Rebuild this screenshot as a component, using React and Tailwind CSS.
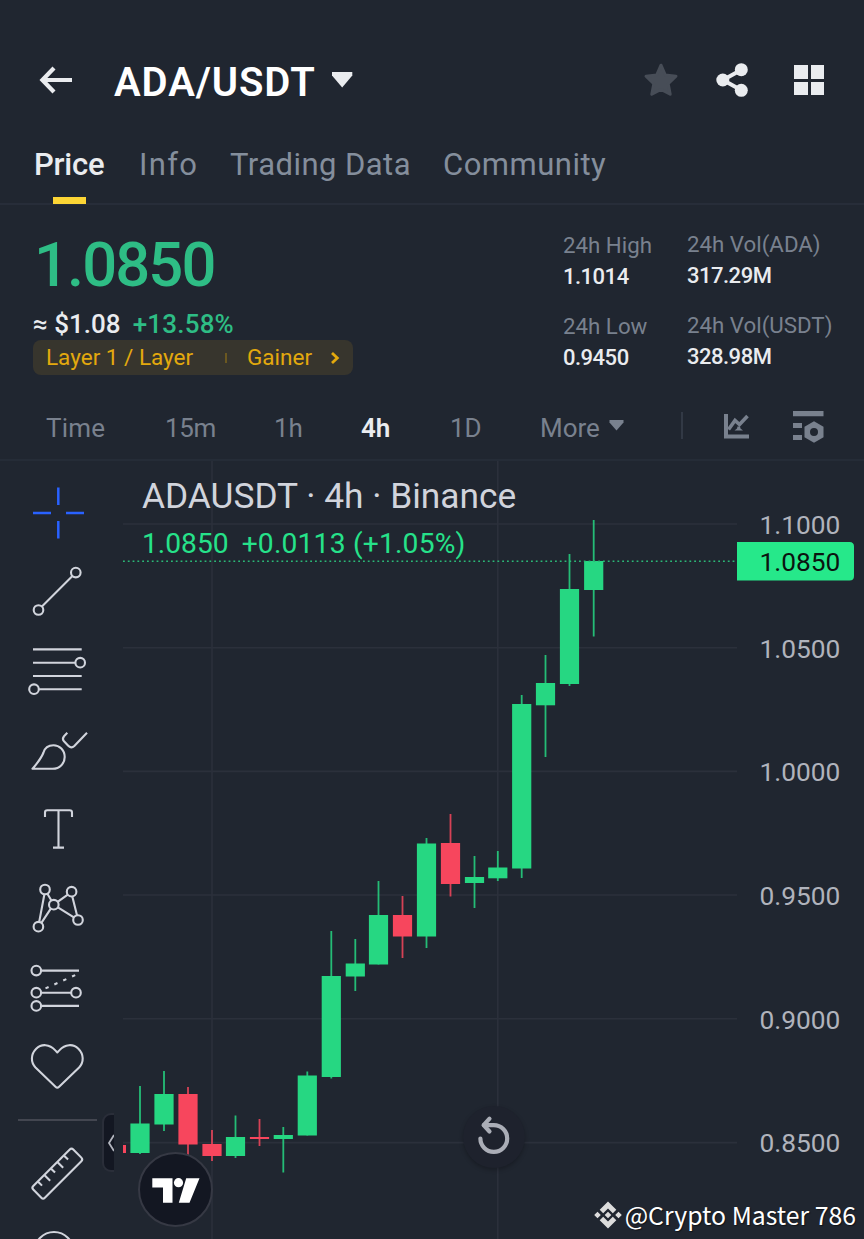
import React from "react";

const UP = "#26d782";
const DOWN = "#f7465d";

/* x centre, wick top, body top, body bottom, wick bottom, colour */
const candles = [
  [140, 1086, 1123.5, 1153, 1154, UP],
  [164, 1071, 1094, 1124.5, 1131, UP],
  [188, 1087, 1094, 1144.5, 1157, DOWN],
  [212, 1130, 1144, 1156, 1161, DOWN],
  [235.5, 1115.5, 1137, 1156, 1158, UP],
  [259.5, 1119, 1137, 1139, 1146, DOWN],
  [283.3, 1127, 1135, 1139, 1172.5, UP],
  [307.3, 1071.5, 1075.5, 1135.5, 1135.5, UP],
  [331.3, 931, 976, 1077, 1078.5, UP],
  [355.3, 939, 963.5, 976.5, 991, UP],
  [378.5, 881, 915, 964.5, 964.5, UP],
  [402.5, 896, 915, 936.5, 958, DOWN],
  [426.5, 838, 843.5, 936.5, 948, UP],
  [450.5, 814, 843, 884, 896.5, DOWN],
  [474.5, 856, 877, 883, 908, UP],
  [497.8, 851, 867.5, 878.3, 881, UP],
  [521.7, 695, 704, 868.5, 878, UP],
  [545.5, 655, 683, 705.3, 757, UP],
  [569.5, 554, 589, 684, 686, UP],
  [593.7, 520, 561, 590, 636.5, UP],
];

const levels = [
  [524, "1.1000"],
  [647.7, "1.0500"],
  [771.4, "1.0000"],
  [895, "0.9500"],
  [1018.8, "0.9000"],
  [1142.6, "0.8500"],
];

function Chart() {
  return (
    <svg className="block h-[778px] w-[741px]" viewBox="123 461 741 778" fontFamily="Roboto, sans-serif">
      <g stroke="#2b303b" strokeWidth="1.6">
        {levels.map(([y]) => (
          <line key={y} x1="123" x2="737" y1={y} y2={y} />
        ))}
        <line x1="212" x2="212" y1="461" y2="1239" />
        <line x1="497.8" x2="497.8" y1="461" y2="1239" />
      </g>
      <rect x="123" y="1145" width="3" height="8" fill={DOWN} />
      {candles.map(([x, wt, bt, bb, wb, c]) => (
        <g key={x} fill={c}>
          <rect x={x - 0.9} y={wt} width="1.8" height={wb - wt} opacity="0.85" />
          <rect x={x - 9.6} y={bt} width="19.2" height={bb - bt} />
        </g>
      ))}
      <line x1="123" x2="737" y1="561.3" y2="561.3" stroke="#2bb877" strokeWidth="1.6" strokeDasharray="1.8 3" />
      <g fill="#b0b3bc" fontSize="26.3">
        {levels.map(([y, label]) => (
          <text key={label} x="759.5" y={y + 9.8}>{label}</text>
        ))}
      </g>
      <path d="M737 542H849.5Q854 542 854 546.5V576Q854 580.5 849.5 580.5H737Z" fill="#26e88a" />
      <text x="759.5" y="570.8" fontSize="26.3" fill="#0b1410">1.0850</text>
    </svg>
  );
}

function Tool({ top, children, color = "#d1d4dc" }) {
  return (
    <svg
      className="block h-[79px] w-[79px] shrink-0"
      viewBox={`18 ${top} 79 79`}
      fill="none"
      stroke={color}
      strokeWidth="2.1"
      strokeLinejoin="round"
    >
      {children}
    </svg>
  );
}

function Toolbar() {
  return (
    <div className="flex h-[778px] w-[123px] shrink-0 flex-col overflow-hidden pl-[18px] pt-3">
      <Tool top={473} color="#2962ff">
        <path strokeWidth="2.5" d="M58.3 487.5V505M58.3 521V538.5M33 513H51M66 513H84" />
      </Tool>
      <Tool top={552}>
        <circle cx="75.8" cy="572.6" r="4.8" />
        <circle cx="38.5" cy="610" r="4.8" />
        <path d="M72.4 576L41.9 606.6" />
      </Tool>
      <Tool top={631}>
        <circle cx="80.2" cy="662.7" r="4.8" />
        <circle cx="34" cy="689.2" r="4.8" />
        <path d="M33 649.4H81.7M33 662.7H75.4M33 676H81.7M38.8 689.2H81.7" />
      </Tool>
      <Tool top={710}>
        <path d="M32.5 768.8H52.5C60 768.8 64.7 763 64.7 757C64.7 750 59.5 745.2 53.5 745.2C47.5 745.2 44.6 748.5 43.5 752.5C41 759 37 763.5 32.5 768.8Z" />
        <path d="M67.3 732.8L64 736.2Q61.8 738.8 64 741.3L68 745.5Q71.2 749 74.3 746L87 732.8" />
      </Tool>
      <Tool top={789}>
        <path d="M45 817V812.5Q45 810.3 47.3 810.3H69.6Q72 810.3 72 812.5V817M58.5 810.3V847.6M53 847.6H64" />
      </Tool>
      <Tool top={868}>
        <circle cx="45" cy="889.5" r="4.8" />
        <circle cx="71.6" cy="891.7" r="4.8" />
        <circle cx="53.8" cy="904.7" r="4.8" />
        <circle cx="78" cy="920" r="4.8" />
        <circle cx="38.4" cy="926.7" r="4.8" />
        <path d="M44.4 894.3L39.2 921.9M47.4 893.7L51.4 900.5M57.6 901.8L67.8 894.6M72.3 896.4L77 915.3M57.9 907.3L73.9 917.4M50.8 908.6L41.4 922.9" />
      </Tool>
      <Tool top={947}>
        <circle cx="36.3" cy="970.6" r="4.8" />
        <circle cx="36.3" cy="992.7" r="4.8" />
        <circle cx="36.3" cy="1005.9" r="4.8" />
        <circle cx="76" cy="992.7" r="4.8" />
        <path d="M41.1 970.6H79M41.1 992.7H71.2M41.1 1005.9H79" />
        <path strokeDasharray="3.4 6.3" d="M45.5 988.4L76 974.8" />
      </Tool>
      <Tool top={1026}>
        <path d="M57.3 1052.5L55.3 1050.4C49.5 1044 41.5 1043.5 36.2 1048.8C30.6 1054.5 30.6 1062 35.5 1067.5L55.5 1086.8Q57.3 1088.5 59.1 1086.8L79.1 1067.5C84 1062 84 1054.5 78.4 1048.8C73.1 1043.5 65.1 1044 59.3 1050.4Z" />
      </Tool>
      <div className="mb-[13px] mt-[14px] h-[2px] w-[79px] shrink-0 bg-[#434650]" />
      <Tool top={1134}>
        <g transform="rotate(-45 57.3 1173.6)">
          <rect x="29" y="1165.4" width="56.6" height="16.4" rx="2.5" />
          <path d="M38 1165.4V1171.3M47.2 1165.4V1173.6M56.4 1165.4V1171.3M65.6 1165.4V1173.6M74.8 1165.4V1171.3" />
        </g>
      </Tool>
      <Tool top={1213}>
        <circle cx="54" cy="1251.5" r="19.5" />
      </Tool>
    </div>
  );
}

function Stat({ label, value }) {
  return (
    <div className="flex h-[80.5px] flex-col whitespace-nowrap">
      <span className="text-[22.3px] leading-[30px] text-[#79818e]">{label}</span>
      <span className="text-[22px] font-medium leading-[33px] tracking-[-0.5px] text-[#eaecef]">{value}</span>
    </div>
  );
}

export default function App() {
  return (
    <div className="relative flex h-[1239px] w-[864px] flex-col overflow-hidden bg-[#202630] font-[Roboto,sans-serif] text-[#eaecef]">
      <header className="flex h-[124px] shrink-0 items-center pl-[39px] pr-[40px] pt-[36px]">
        <svg className="h-[28px] w-[34px] shrink-0" viewBox="0 0 34 28" fill="none" stroke="#eaecef" strokeWidth="4.2">
          <path d="M15 2L3.4 14L15 26M3.4 14H33" />
        </svg>
        <h1 className="ml-[41px] w-[202px] whitespace-nowrap pt-[6px] text-[40px] font-semibold leading-[44px] tracking-[0.9px] text-white">ADA/USDT</h1>
        <svg className="ml-[15px] h-[18px] w-[22px] shrink-0" viewBox="0 0 22 18" fill="#eaecef">
          <path d="M1 1H21.3V4.5L11.2 16.5L1 4.5Z" />
        </svg>
        <div className="ml-auto flex items-center">
          <svg className="h-[36px] w-[36px]" viewBox="0 0 36 36" fill="#474d57" stroke="#474d57" strokeWidth="3" strokeLinejoin="round">
            <path d="M18 3.2L22.3 13L33 14.2L25.2 21.7L27.2 32.3L18 27.4L8.8 32.3L10.8 21.7L3 14.2L13.7 13Z" />
          </svg>
          <svg className="ml-[36px] h-[36px] w-[34px]" viewBox="0 0 34 36" fill="#eaecef">
            <path d="M26 8L8 18L26 28" fill="none" stroke="#eaecef" strokeWidth="4" />
            <circle cx="26.3" cy="7.7" r="6.5" />
            <circle cx="7.8" cy="18" r="6.5" />
            <circle cx="26.3" cy="28.3" r="6.5" />
          </svg>
          <div className="ml-[45px] grid grid-cols-2 gap-[3px]">
            <i className="size-[13.5px] bg-[#eaecef]" />
            <i className="size-[13.5px] bg-[#eaecef]" />
            <i className="size-[13.5px] bg-[#eaecef]" />
            <i className="size-[13.5px] bg-[#eaecef]" />
          </div>
        </div>
      </header>

      <nav className="flex h-[81px] shrink-0 items-start border-b-2 border-[#272d39] pl-[34px] text-[31px] leading-[40px] text-[#848e9c]">
        <div className="flex h-[80px] w-[105px] flex-col pt-[21px]">
          <span className="font-medium tracking-[-0.2px] text-[#eaecef]">Price</span>
          <span className="ml-[19px] mt-[12px] h-[7px] w-[33px] shrink-0 bg-[#fcd535]" />
        </div>
        <span className="w-[91px] whitespace-nowrap pt-[21px] tracking-[1.3px]">Info</span>
        <span className="w-[213px] whitespace-nowrap pt-[21px] tracking-[0.45px]">Trading Data</span>
        <span className="whitespace-nowrap pt-[21px] tracking-[0.5px]">Community</span>
      </nav>

      <section className="flex h-[190px] shrink-0">
        <div className="flex w-[530px] flex-col pl-[33px] pt-[25px]">
          <div className="h-[68px] pl-[1px] pt-[1px] text-[61.5px] font-medium leading-[68px] tracking-[-1.9px] text-[#2ebd85]">1.0850</div>
          <div className="mt-[10px] flex h-[32px] items-center gap-[12px] whitespace-nowrap text-[26px] font-medium">
            <span>≈ $1.08</span>
            <span className="tracking-[0.2px] text-[#2ebd85]">+13.58%</span>
          </div>
          <div className="flex h-[35px] w-[320px] items-center rounded-[8px] bg-[#37352d] pl-[13px] text-[22.5px] text-[#e3a90d]">
            <span className="w-[179px] whitespace-nowrap">Layer 1 / Layer</span>
            <span className="h-[10px] w-[2px] bg-[#6b5820]" />
            <span className="ml-[20px] w-[68px]">Gainer</span>
            <svg className="ml-[15px] h-[14px] w-[10px]" viewBox="0 0 10 14" fill="none" stroke="#e3a90d" strokeWidth="2.8">
              <path d="M2 2L7.3 7L2 12" />
            </svg>
          </div>
        </div>
        <div className="w-[124px] pl-[33px] pt-[25px]">
          <Stat label="24h High" value="1.1014" />
          <Stat label="24h Low" value="0.9450" />
        </div>
        <div className="pl-[33px] pt-[24px]">
          <Stat label="24h Vol(ADA)" value="317.29M" />
          <Stat label="24h Vol(USDT)" value="328.98M" />
        </div>
      </section>

      <div className="flex h-[66px] shrink-0 items-center whitespace-nowrap border-b-2 border-[#252c37] pl-[46px] text-[26px] leading-[32px] text-[#79818e]">
        <span className="w-[119px] pt-[2px] tracking-[0.2px]">Time</span>
        <span className="w-[109px] pt-[2px] tracking-[-0.3px]">15m</span>
        <span className="w-[87px] pt-[2px]">1h</span>
        <span className="w-[89px] pt-[2px] font-semibold text-[#eaecef]">4h</span>
        <span className="w-[90px] pt-[2px]">1D</span>
        <span className="w-[69px] pt-[2px]">More</span>
        <svg className="mb-1 h-[12px] w-[15px]" viewBox="0 0 15 12" fill="#79818e">
          <path d="M0.5 1H14.5V3.5L7.5 11.5L0.5 3.5Z" />
        </svg>
        <span className="mb-[3px] ml-[57px] h-[27px] w-[2px] bg-[#323945]" />
        <svg className="mb-[3px] ml-[41px] h-[28px] w-[26px]" viewBox="0 0 26 28" fill="none" stroke="#79818e">
          <path strokeWidth="4" d="M2 2V24.5H25" />
          <path strokeWidth="3.6" d="M4.5 17.5L11 8.5L15.5 12.5L23.5 4" />
          <path stroke="none" fill="#79818e" d="M10.5 18.5L13 16.5L13.5 14.5H16L16.5 16.5L19 18.5Z" />
        </svg>
        <svg className="mb-[3px] ml-[42px] h-[34px] w-[33px]" viewBox="0 0 33 34" fill="#79818e">
          <path d="M1 2H31.5V7.3H1ZM1 14H10V19H1ZM1 26H10V31H1Z" />
          <path fillRule="evenodd" d="M22 12.3L31.5 17.7V28.3L22 33.7L12.5 28.3V17.7ZM22 19A4 4 0 1 0 22 27A4 4 0 1 0 22 19Z" />
        </svg>
      </div>

      <main className="relative flex h-[778px] shrink-0">
        <Toolbar />
        <Chart />

        <div className="absolute left-[142px] top-[13px] flex flex-col whitespace-nowrap">
          <span className="text-[35.3px] leading-[44px] text-[#d1d4dc]">ADAUSDT · 4h · Binance</span>
          <span className="mt-[8px] flex gap-[13px] text-[28.2px] leading-[36px] text-[#26e28a]">
            <span>1.0850</span>
            <span className="tracking-[0.2px]">+0.0113 (+1.05%)</span>
          </span>
        </div>

        <div className="absolute left-[102px] top-[652px] flex h-[59px] w-[12px] items-center justify-end rounded-l-[9px] border-2 border-r-0 border-[#2a2e39] bg-[#131722]">
          <svg className="h-[18px] w-[7px]" viewBox="0 0 7 18" fill="none" stroke="#b2b5be" strokeWidth="1.8">
            <path d="M7 1L2 9L7 17" />
          </svg>
        </div>

        <div className="absolute left-[138px] top-[691px] flex size-[75px] items-center justify-center rounded-full border-2 border-[#363944] bg-[#131722]">
          <svg className="mt-[2px] h-[25px] w-[48px]" viewBox="151.5 1178.3 48 25" fill="#fff">
            <path d="M151.8 1178.5H172V1203H162.5V1187.7H151.8ZM185.7 1178.5H199L189 1203H178.3Z" />
            <circle cx="178" cy="1183" r="4.6" />
          </svg>
        </div>

        <div className="absolute left-[463px] top-[645px] flex size-[62px] items-center justify-center rounded-full bg-[#1e222d] opacity-95 shadow-[0_2px_4px_rgba(0,0,0,0.25)]">
          <svg className="h-[62px] w-[62px]" viewBox="463 1106 62 62" fill="none" stroke="#b2b5be" strokeWidth="4.2" strokeLinecap="round" strokeLinejoin="round">
            <path d="M480.4 1138.5A13.4 13.4 0 1 0 493.8 1125.1H484" />
            <path d="M489.5 1118.7L483.6 1125.1L489.5 1131.5" />
          </svg>
        </div>

        <div className="absolute bottom-[7px] right-[8px] flex items-center gap-[3px] whitespace-nowrap">
          <svg className="mt-[2px] h-[28px] w-[28px]" viewBox="0 0 28 28" fill="#dcdcdc">
            <path d="M14 0.5L22.3 8.8L18.8 12.3L14 7.5L9.2 12.3L5.7 8.8ZM14 27.5L22.3 19.2L18.8 15.7L14 20.5L9.2 15.7L5.7 19.2ZM14 10.7L17.3 14L14 17.3L10.7 14ZM3.5 10.7L6.8 14L3.5 17.3L0.2 14ZM24.5 10.7L27.8 14L24.5 17.3L21.2 14Z" />
          </svg>
          <span className="font-['Noto_Sans_CJK_SC',sans-serif] text-[24.8px] leading-[36px] text-white [text-shadow:1px_1px_1px_rgba(0,0,0,0.5)]">@Crypto Master 786</span>
        </div>
      </main>
    </div>
  );
}
